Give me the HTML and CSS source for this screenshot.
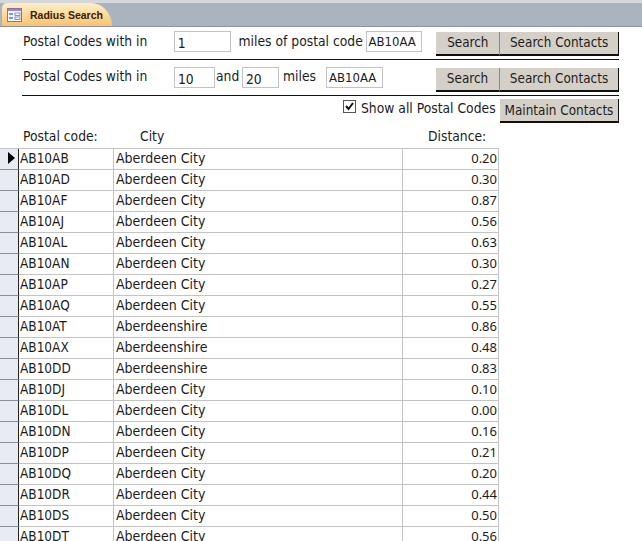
FILE: index.html
```html
<!DOCTYPE html>
<html lang="en">
<head>
  <meta charset="UTF-8" />
  <title>Radius Search</title>
  <link rel="stylesheet" href="styles.css">
</head>
<body>
  <div class="tabbar">
    <div class="tab">
      <svg class="tab-icon" width="15" height="14" viewBox="0 0 15 14">
        <rect x="0.5" y="0.5" width="14" height="13" fill="#f4f6fb" stroke="#8a6fa8"/>
        <rect x="1" y="1" width="13" height="2" fill="#9b86c0"/>
        <path d="M2 6h4M2 10h4" stroke="#4f7fc0" stroke-width="1.5"/>
        <rect x="8" y="5" width="5" height="2.5" fill="#fff" stroke="#4f7fc0" stroke-width="0.8"/>
        <rect x="8" y="9" width="5" height="2.5" fill="#fff" stroke="#4f7fc0" stroke-width="0.8"/>
      </svg>
      <span class="tab-title">Radius Search</span>
    </div>
  </div>

  <div class="form">
    <div class="row row-one">
      <span class="label">Postal Codes with in</span>
      <span class="box box-wide">1</span>
      <span class="text text-miles-of">miles of postal code</span>
      <span class="box box-code">AB10AA</span>
      <button class="btn btn-search">Search</button>
      <button class="btn btn-contacts">Search Contacts</button>
    </div>
    <div class="row row-two">
      <span class="label">Postal Codes with in</span>
      <span class="box box-from">10</span>
      <span class="text text-and">and</span>
      <span class="box box-to">20</span>
      <span class="text text-miles">miles</span>
      <span class="box box-code">AB10AA</span>
      <button class="btn btn-search">Search</button>
      <button class="btn btn-contacts">Search Contacts</button>
    </div>
    <div class="row-three">
      <svg class="check" width="13" height="13" viewBox="0 0 13 13">
        <rect x="0.5" y="0.5" width="12" height="12" fill="#fff" stroke="#555"/>
        <path d="M3 6l2.5 3L10 3" fill="none" stroke="#111" stroke-width="2"/>
      </svg>
      <span class="text text-show">Show all Postal Codes</span>
      <button class="btn btn-maintain">Maintain Contacts</button>
    </div>
  </div>

  <div class="heads">
    <span class="head-code">Postal code:</span>
    <span class="head-city">City</span>
    <span class="head-distance">Distance:</span>
  </div>

  <div class="grid" id="grid"></div>

  <script>
    const rows = [
      ['AB10AB', 'Aberdeen City', '0.20'],
      ['AB10AD', 'Aberdeen City', '0.30'],
      ['AB10AF', 'Aberdeen City', '0.87'],
      ['AB10AJ', 'Aberdeen City', '0.56'],
      ['AB10AL', 'Aberdeen City', '0.63'],
      ['AB10AN', 'Aberdeen City', '0.30'],
      ['AB10AP', 'Aberdeen City', '0.27'],
      ['AB10AQ', 'Aberdeen City', '0.55'],
      ['AB10AT', 'Aberdeenshire', '0.86'],
      ['AB10AX', 'Aberdeenshire', '0.48'],
      ['AB10DD', 'Aberdeenshire', '0.83'],
      ['AB10DJ', 'Aberdeen City', '0.10'],
      ['AB10DL', 'Aberdeen City', '0.00'],
      ['AB10DN', 'Aberdeen City', '0.16'],
      ['AB10DP', 'Aberdeen City', '0.21'],
      ['AB10DQ', 'Aberdeen City', '0.20'],
      ['AB10DR', 'Aberdeen City', '0.44'],
      ['AB10DS', 'Aberdeen City', '0.50'],
      ['AB10DT', 'Aberdeen City', '0.56']
    ];
    const grid = document.getElementById('grid');
    rows.forEach((r, i) => {
      const row = document.createElement('div');
      row.className = 'grid-row';
      row.innerHTML = `<div class="selector">${i === 0 ? '<span class="pointer"></span>' : ''}</div>
        <div class="cell cell-code">${r[0]}</div>
        <div class="cell cell-city">${r[1]}</div>
        <div class="cell cell-distance">${r[2]}</div>`;
      grid.appendChild(row);
    });
  </script>
</body>
</html>
```

FILE: styles.css
```css
html, body {
  margin: 0;
  height: 541px;
  overflow: hidden;
}
body {
  background: #fff;
  color: #1c1c1c;
  font-family: 'DejaVu Sans Condensed', 'DejaVu Sans', sans-serif;
  font-size: 13.75px;
}
.tabbar {
  height: 23px;
  background: #a9b4bf;
  border-top: 3px solid #d4d8dc;
  border-bottom: 1px solid #8b949c;
  display: flex;
  align-items: flex-end;
  padding-left: 2px;
}
.tab {
  width: 110px;
  height: 23px;
  box-sizing: border-box;
  padding-left: 5px;
  display: flex;
  align-items: center;
  gap: 8px;
  background: linear-gradient(#fdeecb, #fddc9f 45%, #fbc26e);
  border-radius: 5px 22px 0 0 / 5px 24px 0 0;
}
.tab-title {
  font-family: 'Liberation Sans', sans-serif;
  font-size: 10.5px;
  font-weight: bold;
  color: #33210c;
}
.form {
  margin-left: 22px;
  width: 597px;
}
.row {
  display: flex;
  align-items: flex-start;
  border-bottom: 1.5px solid #111;
  box-sizing: border-box;
}
.row-one {
  height: 33px;
  padding-top: 4px;
}
.row-one .label, .row-one .text {
  margin-top: 1px;
}
.row-two {
  height: 36px;
  padding-top: 7px;
}
.row-three {
  height: 28px;
  display: flex;
  align-items: flex-start;
  padding-top: 3px;
  box-sizing: border-box;
}
.label {
  width: 152px;
  padding-left: 1px;
  box-sizing: border-box;
  line-height: 19px;
}
.text {
  line-height: 19px;
  white-space: nowrap;
}
.box {
  height: 21px;
  border: 1px solid #c0c4c8;
  box-sizing: border-box;
  padding: 1px 0 0 3px;
  line-height: 20px;
}
.box-wide { width: 57px; }
.box-from { width: 41px; }
.box-to { width: 37px; margin-left: 4px; }
.box-code { width: 57px; line-height: 18px; font-size: 13px; padding-left: 2px; }
.text-miles-of { margin-left: 8px; margin-right: 3px; width: 124px; }
.text-and { width: 23px; padding-left: 1px; box-sizing: border-box; }
.text-miles { margin-left: 4px; width: 43px; }
.row-one .btn-search { margin-left: 14px; }
.row-two .btn-search { margin-left: 53px; }
.btn {
  height: 24px;
  margin-top: 1px;
  padding: 0 0 1px;
  border: none;
  border-right: 1px solid #111;
  border-bottom: 2px solid #111;
  background: #d4d0c8;
  color: #1c1c1c;
  font: inherit;
  font-size: 13.4px;
  box-sizing: border-box;
}
.btn-search { width: 64px; border-right-color: #8d8a84; }
.btn-contacts { width: 119px; }
.btn-maintain { width: 119px; margin: 0 0 0 5px; padding: 0; }
.check { margin-left: 321px; margin-top: 1px; }
.text-show { margin-left: 5px; width: 134px; }
.heads {
  display: flex;
  height: 21px;
  line-height: 19px;
  margin-top: 3px;
  padding-left: 23px;
}
.head-code { width: 117px; }
.head-city { width: 288px; }
.grid {
  width: 499px;
  border-top: 1px solid #c4c4c4;
}
.grid-row {
  display: flex;
  height: 21px;
  box-sizing: border-box;
  border-bottom: 1px solid #c4c4c4;
  line-height: 19px;
}
.selector {
  width: 18px;
  background: #e8ecf2;
  border-right: 1px solid #222;
  border-bottom: 1px solid #8a8f96;
  margin-bottom: -1px;
  position: relative;
}
.pointer {
  position: absolute;
  left: 8px;
  top: 3px;
  border-left: 7px solid #000;
  border-top: 6px solid transparent;
  border-bottom: 6px solid transparent;
}
.cell {
  box-sizing: border-box;
  border-right: 1px solid #c4c4c4;
  padding: 0 2px 0 1px;
}
.cell-code { width: 95px; font-size: 13.5px; }
.cell-city { width: 289px; padding-left: 2px; font-size: 14px; }
.cell-distance {
  width: 96px;
  text-align: right;
  font-family: 'Noto Sans', sans-serif;
  font-size: 13px;
  padding-right: 1px;
}
```
